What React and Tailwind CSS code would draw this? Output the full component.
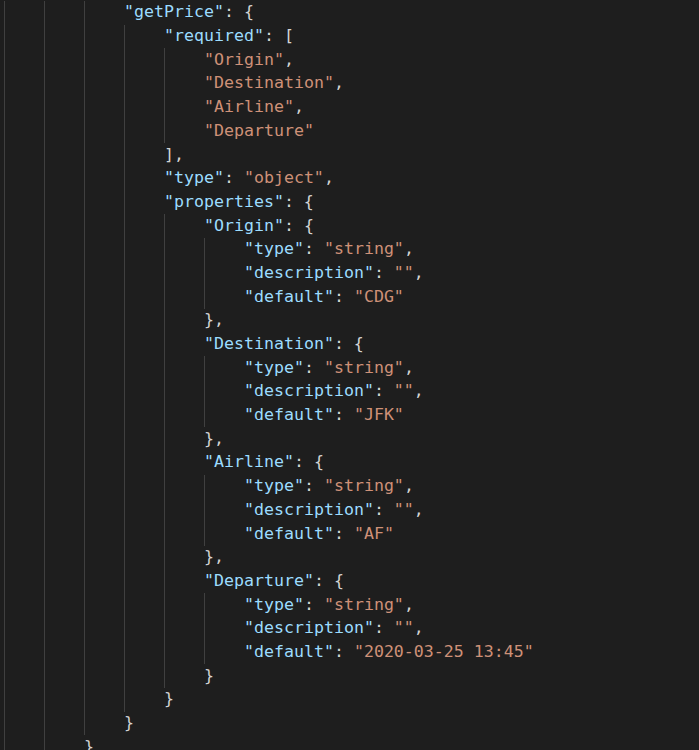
import React from "react";

const K = "text-[#9cdcfe]";
const S = "text-[#ce9178]";
const P = "text-[#d4d4d4]";

const prop = (name, val, comma) => [
  [K, `"${name}"`],
  [P, ": "],
  [S, `"${val}"`],
  ...(comma ? [[P, ","]] : []),
];

const obj = (name, def, last) => [
  [5, [[K, `"${name}"`], [P, ": {"]]],
  [6, prop("type", "string", true)],
  [6, prop("description", "", true)],
  [6, prop("default", def, false)],
  [5, [[P, last ? "}" : "},"]]],
];

const lines = [
  [3, [[K, '"getPrice"'], [P, ": {"]]],
  [4, [[K, '"required"'], [P, ": ["]]],
  [5, [[S, '"Origin"'], [P, ","]]],
  [5, [[S, '"Destination"'], [P, ","]]],
  [5, [[S, '"Airline"'], [P, ","]]],
  [5, [[S, '"Departure"']]],
  [4, [[P, "],"]]],
  [4, prop("type", "object", true)],
  [4, [[K, '"properties"'], [P, ": {"]]],
  ...obj("Origin", "CDG"),
  ...obj("Destination", "JFK"),
  ...obj("Airline", "AF"),
  ...obj("Departure", "2020-03-25 13:45", true),
  [4, [[P, "}"]]],
  [3, [[P, "}"]]],
  [2, [[P, "}"]]],
];

function Line({ level, tokens }) {
  return (
    <div className="flex h-[23.7px] items-stretch pl-[4px]">
      {Array.from({ length: level }).map((_, i) => (
        <div key={i} className="w-10 shrink-0 border-l border-[#404040]" />
      ))}
      <div className="flex items-center whitespace-pre">
        {tokens.map(([c, t], i) => (
          <span key={i} className={c}>
            {t}
          </span>
        ))}
      </div>
    </div>
  );
}

export default function App() {
  return (
    <div
      className="h-[750px] w-[699px] overflow-hidden bg-[#1e1e1e] text-[16.6px]"
      style={{ fontFamily: '"DejaVu Sans Mono", "Liberation Mono", monospace' }}
    >
      <div className="mt-[1px]">
        {lines.map(([level, tokens], i) => (
          <Line key={i} level={level} tokens={tokens} />
        ))}
      </div>
    </div>
  );
}
